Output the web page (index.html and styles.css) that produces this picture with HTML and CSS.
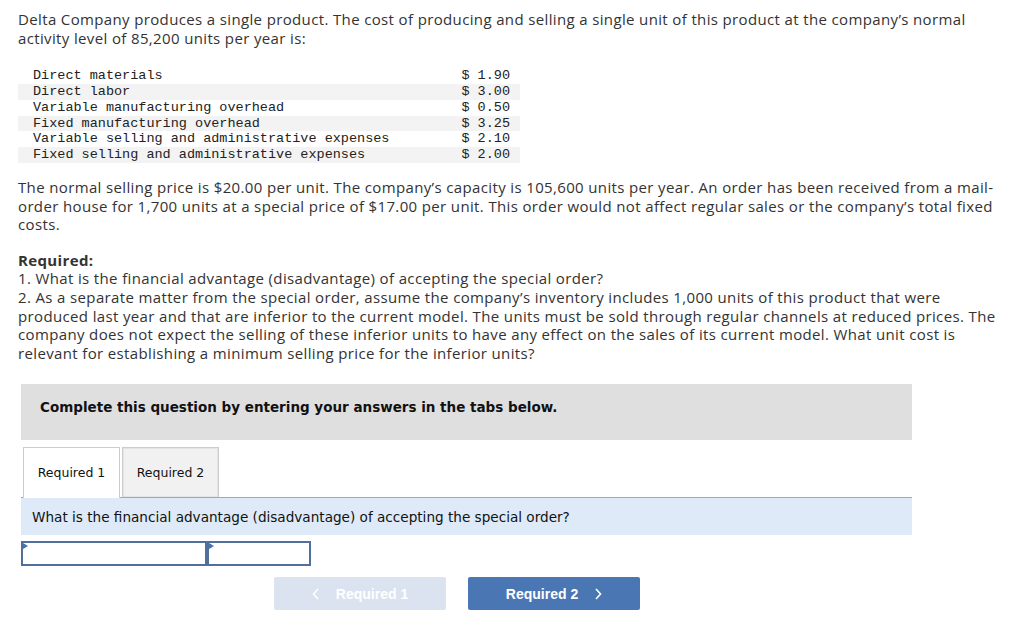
FILE: index.html
```html
<!DOCTYPE html>
<html lang="en">
<head>
<meta charset="utf-8">
<title>Delta Company</title>
<link rel="stylesheet" href="styles.css">
</head>
<body>
<div class="page">
  <p class="para">Delta Company produces a single product. The cost of producing and selling a single unit of this product at the company’s normal activity level of 85,200 units per year is:</p>

  <table class="costs">
    <tr><td class="label">Direct materials</td><td class="amt">$ 1.90</td></tr>
    <tr><td class="label">Direct labor</td><td class="amt">$ 3.00</td></tr>
    <tr><td class="label">Variable manufacturing overhead</td><td class="amt">$ 0.50</td></tr>
    <tr><td class="label">Fixed manufacturing overhead</td><td class="amt">$ 3.25</td></tr>
    <tr><td class="label">Variable selling and administrative expenses</td><td class="amt">$ 2.10</td></tr>
    <tr><td class="label">Fixed selling and administrative expenses</td><td class="amt">$ 2.00</td></tr>
  </table>

  <p class="para para2">The normal selling price is $20.00 per unit. The company’s capacity is 105,600 units per year. An order has been received from a mail-order house for 1,700 units at a special price of $17.00 per unit. This order would not affect regular sales or the company’s total fixed costs.</p>

  <div class="required">
    <div class="req-title">Required:</div>
    <div>1. What is the financial advantage (disadvantage) of accepting the special order?</div>
    <div>2. As a separate matter from the special order, assume the company’s inventory includes 1,000 units of this product that were produced last year and that are inferior to the current model. The units must be sold through regular channels at reduced prices. The company does not expect the selling of these inferior units to have any effect on the sales of its current model. What unit cost is relevant for establishing a minimum selling price for the inferior units?</div>
  </div>

  <div class="answer">
    <div class="instructions">Complete this question by entering your answers in the tabs below.</div>

    <div class="tabs">
      <div class="tab active">Required 1</div>
      <div class="tab">Required 2</div>
    </div>

    <div class="question">What is the financial advantage (disadvantage) of accepting the special order?</div>

    <div class="inputs">
      <div class="field wide"><span class="flag"></span></div>
      <div class="field narrow"><span class="flag"></span></div>
    </div>

    <div class="nav">
      <div class="btn prev">
        <svg class="chev" width="7" height="12" viewBox="0 0 7 12"><path d="M6 1 L1.5 6 L6 11" fill="none" stroke="#ffffff" stroke-width="1.6"/></svg>
        <span>Required 1</span>
      </div>
      <div class="btn next">
        <span>Required 2</span>
        <svg class="chev" width="7" height="12" viewBox="0 0 7 12"><path d="M1 1 L5.5 6 L1 11" fill="none" stroke="#ffffff" stroke-width="1.6"/></svg>
      </div>
    </div>
  </div>
</div>
</body>
</html>
```

FILE: styles.css
```css
html, body {
  margin: 0;
  padding: 0;
  background: #ffffff;
}

.page {
  padding: 10px 18px 0 18px;
  font-family: "Open Sans", "Liberation Sans", sans-serif;
  font-size: 15px;
  line-height: 18.6px;
  letter-spacing: 0.36px;
  color: #333333;
}

.para {
  margin: 0;
}

.costs {
  border-collapse: collapse;
  width: 502px;
  margin-top: 21px;
  font-family: "Liberation Mono", "Courier New", monospace;
  font-size: 13.5px;
  letter-spacing: 0;
  color: #222222;
}

.costs td {
  height: 15.8px;
  padding: 0;
  line-height: 15.8px;
  white-space: pre;
}

.costs tr:nth-child(even) td {
  background: #f3f3f3;
}

.costs .label {
  padding-left: 15px;
}

.costs .amt {
  text-align: right;
  padding-right: 10px;
}

.para2 {
  margin-top: 15px;
}

.required {
  margin-top: 17px;
}

.req-title {
  font-weight: 700;
}

.answer {
  margin: 22px 94px 0 3px;
  font-family: "DejaVu Sans", Verdana, sans-serif;
  font-size: 12.5px;
  letter-spacing: 0;
  color: #111111;
}

.instructions {
  background: #dfdfdf;
  padding: 15px 19px 25px 19px;
  line-height: 16px;
  font-weight: 700;
  font-size: 13.5px;
}

.tabs {
  display: flex;
  gap: 2px;
  margin-top: 7px;
  padding-left: 2px;
  border-bottom: 1px solid #a8a8a8;
}

.tab {
  height: 49px;
  width: 95px;
  box-sizing: content-box;
  display: flex;
  align-items: center;
  justify-content: center;
  border: 1px solid #cccccc;
  border-bottom: none;
  background: #f1f1f1;
  box-shadow: inset 0 0 0 1px #e4e4e4;
}

.tab.active {
  background: #ffffff;
  box-shadow: none;
  margin-bottom: -1px;
  height: 50px;
}

.question {
  background: #deeaf7;
  height: 37px;
  display: flex;
  align-items: center;
  padding-left: 11px;
  font-size: 13.6px;
}

.inputs {
  display: flex;
  margin-top: 6px;
}

.field {
  position: relative;
  height: 21px;
  border: 2px solid #506f9c;
  background: #ffffff;
}

.field.wide {
  width: 182px;
}

.field.narrow {
  width: 100px;
}

.flag {
  position: absolute;
  left: 0;
  top: 0;
  width: 0;
  height: 0;
  border-top: 3px solid transparent;
  border-bottom: 3px solid transparent;
  border-left: 5px solid #3d74bb;
}

.nav {
  display: flex;
  gap: 22px;
  margin-top: 11px;
  padding-left: 253px;
}

.btn {
  width: 172px;
  height: 33px;
  border-radius: 2px;
  display: flex;
  align-items: center;
  justify-content: center;
  gap: 17px;
  font-family: "Liberation Sans", Arial, sans-serif;
  font-weight: 700;
  font-size: 14px;
  color: #ffffff;
}

.btn.prev {
  background: #dae3ef;
}

.btn.next {
  background: #4a77b4;
}

.chev {
  display: block;
}
```
